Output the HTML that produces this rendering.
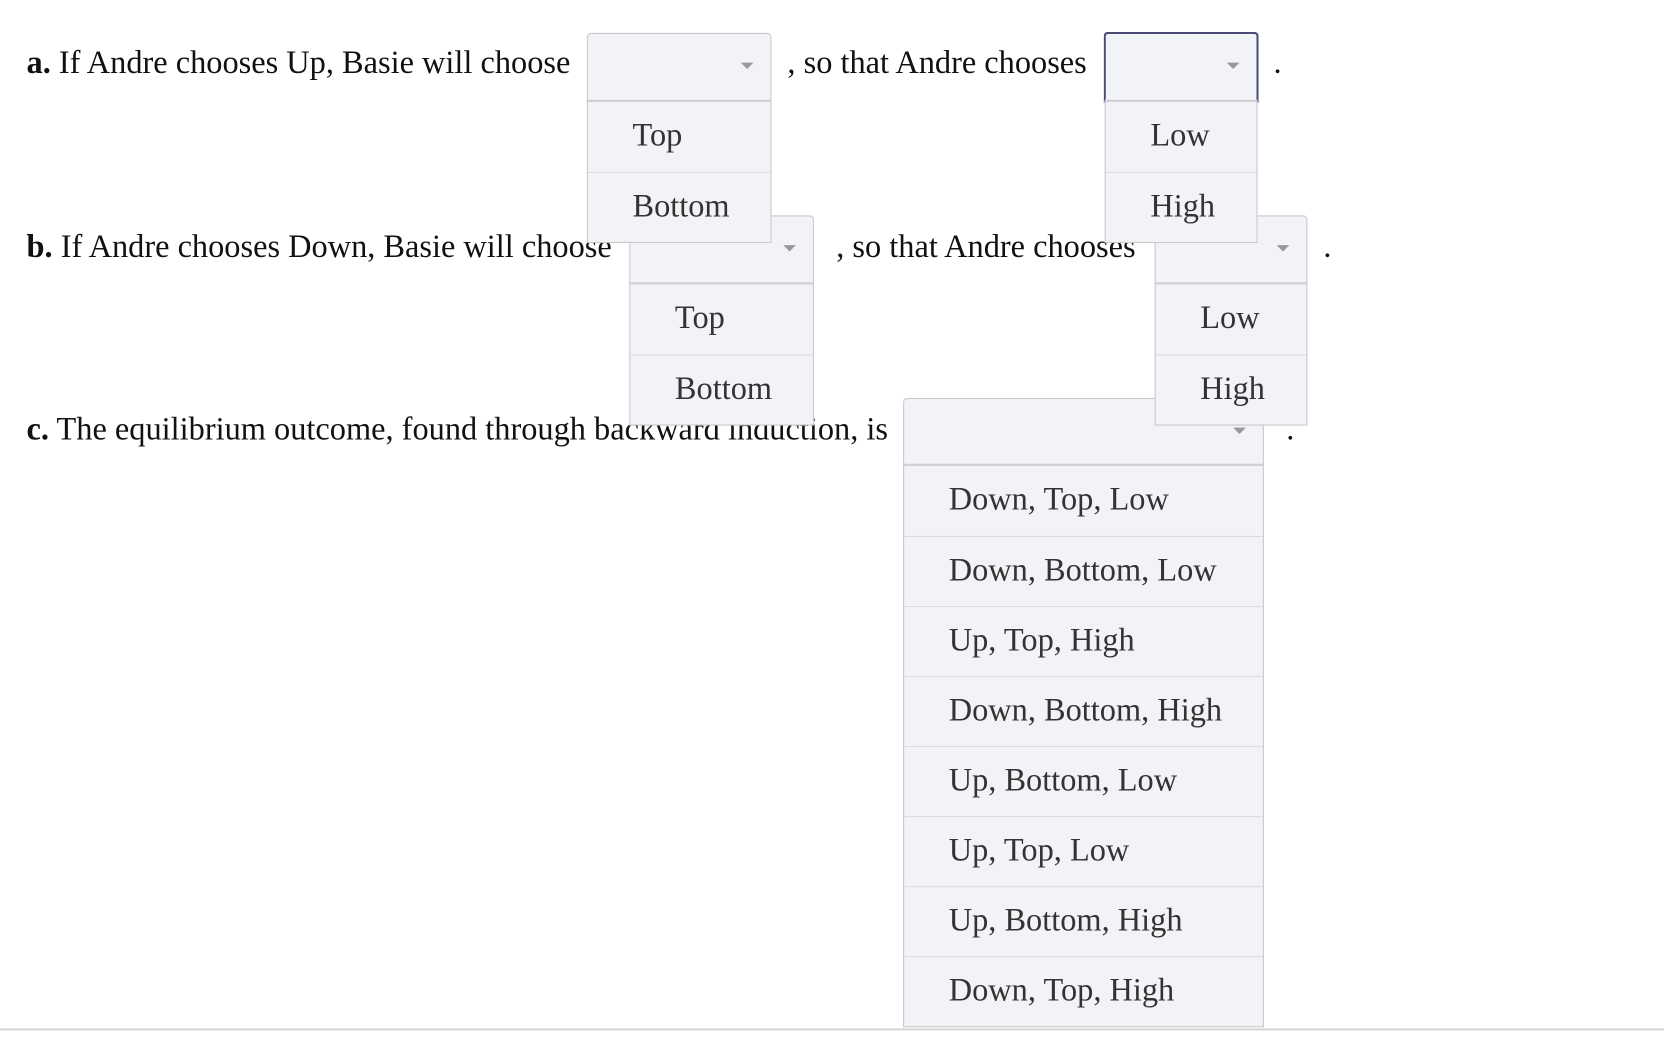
<!DOCTYPE html>
<html><head><meta charset="utf-8"><style>
html,body{margin:0;padding:0;background:#fff;overflow:hidden}
body{width:1664px;height:1040px}
#w{position:absolute;left:0;top:0;width:1568px;height:980px;transform:scale(1.06122);transform-origin:0 0;font-family:"Liberation Serif",serif;color:#111}
.t{position:absolute;font-size:30.5px;white-space:nowrap;line-height:1}
.s{position:absolute;background:#f2f3f6;border:1px solid #c8c8cc;border-radius:4px 4px 0 0;box-sizing:border-box}
.s:after{content:"";position:absolute;right:16px;top:27px;border-left:6px solid transparent;border-right:6px solid transparent;border-top:6px solid #999}
.f{border:2px solid #4a4a78;border-bottom-color:#c8c8cc}
.o{position:absolute;background:#f2f3f6;border:1px solid #c8c8cc;border-top:2px solid #cfcfd3;box-sizing:border-box}
.o div{height:66px;border-top:1px solid #dcdce0;box-sizing:border-box;font-size:30.5px;color:#333;line-height:62px;padding-left:42px}
.o div:first-child{border-top:none}
</style></head><body><div id="w">
<div class="t" style="left:25px;top:44px"><b>a.</b> If Andre chooses Up, Basie will choose</div>
<div class="t" style="left:742px;top:44px">, so that Andre chooses</div>
<div class="t" style="left:1200px;top:44px">.</div>
<div class="t" style="left:25px;top:217px"><b>b.</b> If Andre chooses Down, Basie will choose</div>
<div class="t" style="left:788px;top:217px">, so that Andre chooses</div>
<div class="t" style="left:1247px;top:217px">.</div>
<div class="t" style="left:25px;top:389px"><b>c.</b> The equilibrium outcome, found through backward induction, is</div>
<div class="t" style="left:1212px;top:389px">.</div>

<div class="s" style="left:851px;top:375px;width:340px;height:64px;z-index:1"></div>
<div class="o" style="left:851px;top:437px;width:340px;z-index:1">
<div>Down, Top, Low</div><div>Down, Bottom, Low</div><div>Up, Top, High</div><div>Down, Bottom, High</div><div>Up, Bottom, Low</div><div>Up, Top, Low</div><div>Up, Bottom, High</div><div>Down, Top, High</div></div>

<div class="s" style="left:593px;top:203px;width:174px;height:65px;z-index:2"></div>
<div class="o" style="left:593px;top:266px;width:174px;z-index:2"><div>Top</div><div>Bottom</div></div>
<div class="s" style="left:1088px;top:203px;width:144px;height:65px;z-index:2"></div>
<div class="o" style="left:1088px;top:266px;width:144px;z-index:2"><div>Low</div><div>High</div></div>

<div class="s" style="left:553px;top:31px;width:174px;height:65px;z-index:3"></div>
<div class="o" style="left:553px;top:94px;width:174px;z-index:3"><div>Top</div><div>Bottom</div></div>
<div class="s f" style="left:1040px;top:30px;width:146px;height:67px;z-index:3"></div>
<div class="o" style="left:1041px;top:94px;width:144px;z-index:3"><div>Low</div><div>High</div></div>

<div style="position:absolute;left:0;top:969px;width:1568px;height:2px;background:#d6d6d6"></div>
</div></body></html>
